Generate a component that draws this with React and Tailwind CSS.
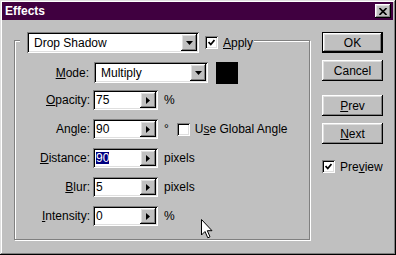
const raised = "shadow-[inset_-1px_-1px_#000,inset_1px_1px_#fff,inset_-2px_-2px_#808080,inset_2px_2px_#dfdfdf]";
const sunken = "shadow-[inset_1px_1px_#808080,inset_-1px_-1px_#fff,inset_2px_2px_#000,inset_-2px_-2px_#dfdfdf]";

const K = ({ children }) => <span className="underline underline-offset-[1px]">{children}</span>;

const CheckBox = ({ checked }) => (
  <div className={`w-[13px] h-[13px] bg-white flex items-center justify-center shrink-0 ${sunken}`}>
    {checked && (
      <svg width="7" height="7" viewBox="0 0 7 7">
        <path d="M0.5 3 L2.8 5.5 L6.5 1" stroke="#000" strokeWidth="1.8" fill="none" />
      </svg>
    )}
  </div>
);

const ArrowButton = ({ dir }) => (
  <div className={`w-[16px] h-full bg-[#c0c0c0] flex items-center justify-center ${raised}`}>
    {dir === "down" ? (
      <svg width="7" height="4" viewBox="0 0 7 4"><path d="M0 0 H7 L3.5 4 Z" fill="#000" /></svg>
    ) : (
      <svg width="4" height="7" viewBox="0 0 4 7"><path d="M0 0 L4 3.5 L0 7 Z" fill="#000" /></svg>
    )}
  </div>
);

const Combo = ({ value, width }) => (
  <div className={`${width} h-[21px] bg-white p-[2px] flex ${sunken}`}>
    <div className="flex-1 flex items-center pl-[5px]">{value}</div>
    <ArrowButton dir="down" />
  </div>
);

const Spin = ({ value, selected }) => (
  <div className={`w-[65px] h-[20px] bg-white p-[2px] flex shrink-0 ${sunken}`}>
    <div className="flex-1 flex items-center pl-[1px]">
      <span className={selected ? "bg-[#000080] text-white" : ""}>{value}</span>
    </div>
    <ArrowButton dir="right" />
  </div>
);

const Button = ({ children, primary }) =>
  primary ? (
    <div className="h-[21px] border border-black">
      <div className={`h-full bg-[#c0c0c0] flex items-center justify-center ${raised}`}>{children}</div>
    </div>
  ) : (
    <div className={`h-[21px] bg-[#c0c0c0] flex items-center justify-center ${raised}`}>{children}</div>
  );

const Row = ({ label, children }) => (
  <div className="flex items-center h-[20px]">
    <div className="w-[75px] text-right">{label}</div>
    <div className="ml-[3px] flex items-center">{children}</div>
  </div>
);

const fields = [
  { label: <><K>O</K>pacity:</>, value: "75", unit: "%" },
  { label: <>An<K>g</K>le:</>, value: "90", unit: "°", global: true },
  { label: <><K>D</K>istance:</>, value: "90", unit: "pixels", selected: true },
  { label: <><K>B</K>lur:</>, value: "5", unit: "pixels" },
  { label: <><K>I</K>ntensity:</>, value: "0", unit: "%" },
];

export default function App() {
  return (
    <div className="relative w-[396px] h-[255px] overflow-hidden bg-[#c0c0c0] pt-[2px] pl-[2px] pr-[3px] text-[12px] leading-none text-black font-['Liberation_Sans',Arial,sans-serif] shadow-[inset_-1px_-1px_#000,inset_1px_1px_#dfdfdf,inset_-2px_-2px_#808080,inset_2px_2px_#fff]">
      {/* title bar */}
      <div className="h-[18px] bg-[#400040] flex items-center justify-between pl-[3px] pr-[2px]">
        <span className="font-bold text-white">Effects</span>
        <div className={`w-[16px] h-[14px] bg-[#c0c0c0] flex items-center justify-center ${raised}`}>
          <svg width="8" height="7" viewBox="0 0 8 7">
            <path d="M0.5 0 L7.5 7 M7.5 0 L0.5 7" stroke="#000" strokeWidth="1.6" />
          </svg>
        </div>
      </div>

      <div className="flex">
        {/* group box */}
        <div className="ml-[12px] mt-[20px] w-[296px] h-[200px] border border-[#808080] shadow-[inset_1px_1px_#fff,1px_1px_#fff]">
          <div className="-mt-[9px] ml-[5px] w-fit bg-[#c0c0c0] pl-[7px] pr-[1px] flex items-center">
            <Combo value="Drop Shadow" width="w-[172px]" />
            <div className="ml-[6px]"><CheckBox checked /></div>
            <span className="ml-[5px]"><K>A</K>pply</span>
          </div>

          <div className="mt-[9px] flex items-center h-[21px]">
            <div className="w-[74px] text-right"><K>M</K>ode:</div>
            <div className="ml-[5px]"><Combo value="Multiply" width="w-[114px]" /></div>
            <div className="ml-[8px] w-[22px] h-[22px] bg-black" />
          </div>

          <div className="mt-[7px] flex flex-col gap-[9px]">
            {fields.map((f, i) => (
              <Row key={i} label={f.label}>
                <Spin value={f.value} selected={f.selected} />
                <span className="ml-[6px]">{f.unit}</span>
                {f.global && (
                  <div className="ml-[8px] flex items-center">
                    <CheckBox />
                    <span className="ml-[5px]">U<K>s</K>e Global Angle</span>
                  </div>
                )}
              </Row>
            ))}
          </div>
        </div>

        {/* buttons */}
        <div className="ml-[12px] mt-[12px] w-[61px] flex flex-col">
          <Button primary>OK</Button>
          <div className="mt-[7px]"><Button>Cancel</Button></div>
          <div className="mt-[14px]"><Button><K>P</K>rev</Button></div>
          <div className="mt-[7px]"><Button><K>N</K>ext</Button></div>
          <div className="mt-[16px] flex items-center">
            <CheckBox checked />
            <span className="ml-[5px]">Pre<K>v</K>iew</span>
          </div>
        </div>
      </div>

      {/* mouse pointer */}
      <svg className="absolute left-[201px] top-[219px]" width="12" height="20" viewBox="0 0 12 20">
        <path d="M0.5 0.5 V16 L4 12.5 L6.8 18.8 L9 17.8 L6.3 11.7 H11 Z" fill="#fff" stroke="#000" strokeWidth="1" />
      </svg>
    </div>
  );
}
